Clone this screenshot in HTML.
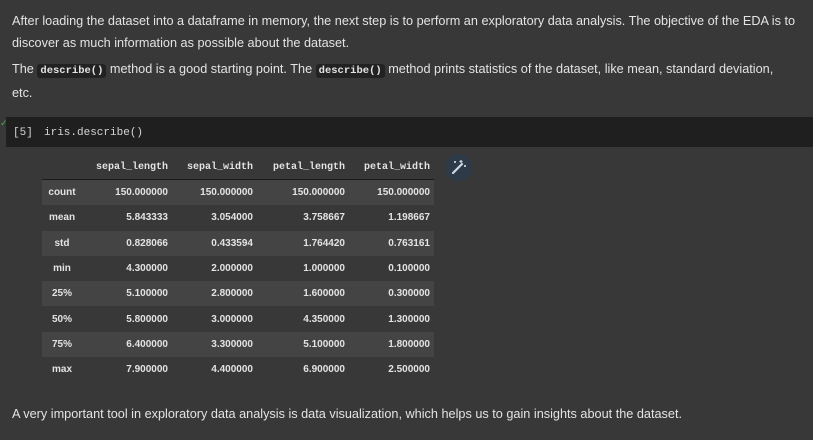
<!DOCTYPE html>
<html><head><style>
body{margin:0;width:813px;height:440px;background:#383838;font-family:"Liberation Sans",sans-serif;color:#e3e3e3;position:relative;overflow:hidden}
.p{position:absolute;left:12px;font-size:12.7px;line-height:22px;width:800px}
code{font-family:"Liberation Mono",monospace;font-size:10.5px;background:#222;padding:1px 3px;border-radius:3px;font-weight:bold}
.cell{position:absolute;left:6px;top:117px;width:807px;height:30px;background:#1f1f1f}
.cell span{position:absolute;top:10px;font-family:"Liberation Mono",monospace;font-size:11px;color:#d5d5d5}
table{position:absolute;left:42px;top:155px;border-collapse:collapse;font-size:10px;font-weight:bold}
th{font-family:"Liberation Mono",monospace;font-size:10px;height:24px;text-align:right;padding:0 4px 0 6px;border-bottom:1px solid #1a1a1a}
td{height:25.3px;text-align:right;padding:0 4px 0 6px}
td:first-child{text-align:center;padding:0 6px}
tr.s td{background:#444}
.w{position:absolute;left:445px;top:154px;width:27px;height:27px;border-radius:50%;background:#2f3a48}
</style></head><body>
<div class="p" style="top:10px">After loading the dataset into a dataframe in memory, the next step is to perform an exploratory data analysis. The objective of the EDA is to discover as much information as possible about the dataset.</div>
<div class="p" style="top:58px;width:785px">The <code>describe()</code> method is a good starting point. The <code>describe()</code> method prints statistics of the dataset, like mean, standard deviation, etc.</div>
<div style="position:absolute;left:0;top:118px;color:#4caf50;font-size:9px">✓</div>
<div class="cell"><span style="left:7px">[5]</span><span style="left:38px">iris.describe()</span></div>
<table>
<tr><th style="width:30px"></th><th style="width:80px">sepal_length</th><th style="width:75px">sepal_width</th><th style="width:82px">petal_length</th><th style="width:75px">petal_width</th></tr>
<tr class="s"><td>count</td><td>150.000000</td><td>150.000000</td><td>150.000000</td><td>150.000000</td></tr>
<tr><td>mean</td><td>5.843333</td><td>3.054000</td><td>3.758667</td><td>1.198667</td></tr>
<tr class="s"><td>std</td><td>0.828066</td><td>0.433594</td><td>1.764420</td><td>0.763161</td></tr>
<tr><td>min</td><td>4.300000</td><td>2.000000</td><td>1.000000</td><td>0.100000</td></tr>
<tr class="s"><td>25%</td><td>5.100000</td><td>2.800000</td><td>1.600000</td><td>0.300000</td></tr>
<tr><td>50%</td><td>5.800000</td><td>3.000000</td><td>4.350000</td><td>1.300000</td></tr>
<tr class="s"><td>75%</td><td>6.400000</td><td>3.300000</td><td>5.100000</td><td>1.800000</td></tr>
<tr><td>max</td><td>7.900000</td><td>4.400000</td><td>6.900000</td><td>2.500000</td></tr>
</table>
<div class="w"><svg width="27" height="27" viewBox="0 0 27 27"><path d="M8 19 L17 10" stroke="#cfd8e3" stroke-width="2.2" stroke-linecap="round"/><path d="M16 6v3M14.5 7.5h3M20 11v2M19 12h2M10 7v2M9 8h2" stroke="#cfd8e3" stroke-width="1.2"/></svg></div>
<div class="p" style="top:403px">A very important tool in exploratory data analysis is data visualization, which helps us to gain insights about the dataset.</div>
</body></html>
